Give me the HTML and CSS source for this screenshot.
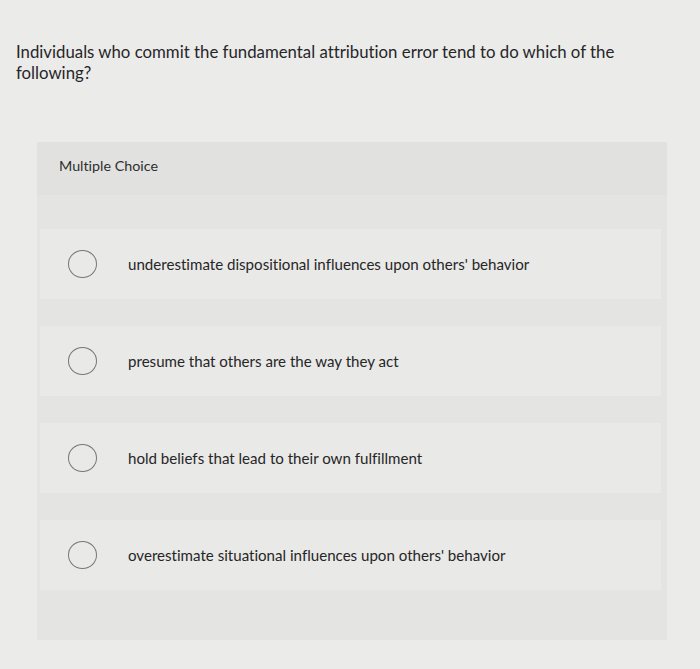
FILE: index.html
```html
<!DOCTYPE html>
<html>
<head>
<meta charset="utf-8">
<link rel="stylesheet" href="styles.css">
</head>
<body>
<div class="page">
  <p class="question">Individuals who commit the fundamental attribution error tend to do which of the following?</p>
  <div class="panel">
    <div class="panel-head">Multiple Choice</div>
    <div class="options">
      <div class="option"><span class="radio"></span><span class="label">underestimate dispositional influences upon others' behavior</span></div>
      <div class="option"><span class="radio"></span><span class="label">presume that others are the way they act</span></div>
      <div class="option"><span class="radio"></span><span class="label">hold beliefs that lead to their own fulfillment</span></div>
      <div class="option"><span class="radio"></span><span class="label">overestimate situational influences upon others' behavior</span></div>
    </div>
  </div>
</div>
</body>
</html>
```
FILE: styles.css
```css
html, body {
  margin: 0;
  padding: 0;
  background: #ebebea;
}
.page {
  width: 700px;
  height: 669px;
  overflow: hidden;
  font-family: Lato, "Liberation Sans", sans-serif;
  font-variant-ligatures: none;
  color: #2a2a2a;
  padding-top: 41px;
  box-sizing: border-box;
}
.question {
  margin: 0 0 0 16px;
  width: 620px;
  font-size: 16.8px;
  line-height: 21px;
  color: #262626;
}
.panel {
  margin: 59px 0 0 37px;
  width: 630px;
  height: 498px;
  background: #e4e4e3;
}
.panel-head {
  height: 53px;
  background: #e1e1e0;
  box-sizing: border-box;
  padding: 15px 0 0 22px;
  font-size: 14.3px;
  line-height: 18px;
  color: #2e2e2e;
}
.options {
  display: flex;
  flex-direction: column;
  gap: 27px;
  padding: 34px 6px 0 3px;
}
.option {
  height: 70px;
  display: flex;
  align-items: center;
  background: #e9e9e8;
  padding-left: 28px;
}
.radio {
  width: 27px;
  height: 26px;
  border: 1.5px solid #77777a;
  border-radius: 50%;
  flex: none;
}
.label {
  margin-left: 31px;
  font-size: 15.1px;
  color: #262626;
}
```
